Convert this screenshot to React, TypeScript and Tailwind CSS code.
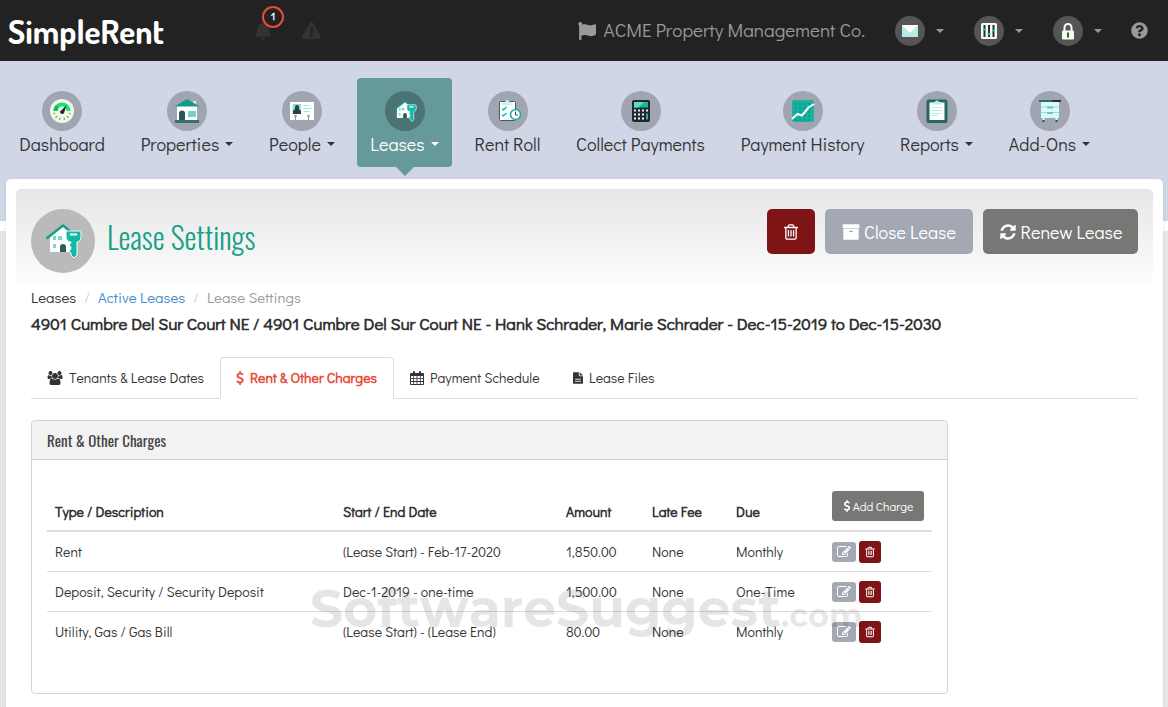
import { ReactNode } from "react";
import { FaBell, FaExclamationTriangle, FaFlag, FaQuestionCircle } from "react-icons/fa";
import clsx from "clsx";

const PATHS = {
  trash:
    "M704 736v576q0 14-9 23t-23 9h-64q-14 0-23-9t-9-23v-576q0-14 9-23t23-9h64q14 0 23 9t9 23zm256 0v576q0 14-9 23t-23 9h-64q-14 0-23-9t-9-23v-576q0-14 9-23t23-9h64q14 0 23 9t9 23zm256 0v576q0 14-9 23t-23 9h-64q-14 0-23-9t-9-23v-576q0-14 9-23t23-9h64q14 0 23 9t9 23zm128 724v-948h-896v948q0 22 7 40.5t14.5 27 10.5 8.5h832q3 0 10.5-8.5t14.5-27 7-40.5zm-672-1076h448l-48-117q-7-9-17-11h-317q-10 2-17 11zm928 32v64q0 14-9 23t-23 9h-96v948q0 83-47 143.5t-113 60.5h-832q-66 0-113-58.5t-47-141.5v-952h-96q-14 0-23-9t-9-23v-64q0-14 9-23t23-9h309l70-167q15-37 54-63t79-26h320q40 0 79 26t54 63l70 167h309q14 0 23 9t9 23z",
  refresh:
    "M1639 1056q0 5-1 7-64 268-268 434.5t-478 166.5q-146 0-282.5-55t-243.5-157l-129 129q-19 19-45 19t-45-19-19-45v-448q0-26 19-45t45-19h448q26 0 45 19t19 45-19 45l-137 137q71 66 161 102t187 36q134 0 250-65t186-179q11-17 53-117 8-23 30-23h192q13 0 22.5 9.5t9.5 22.5zm25-800v448q0 26-19 45t-45 19h-448q-26 0-45-19t-19-45 19-45l138-138q-148-137-349-137-134 0-250 65t-186 179q-11 17-53 117-8 23-30 23h-199q-13 0-22.5-9.5t-9.5-22.5v-7q65-268 270-434.5t480-166.5q146 0 284 55.5t245 156.5l130-129q19-19 45-19t45 19 19 45z",
  archive:
    "M1088 832q0-26-19-45t-45-19h-256q-26 0-45 19t-19 45 19 45 45 19h256q26 0 45-19t19-45zm576-192v960q0 26-19 45t-45 19h-1408q-26 0-45-19t-19-45v-960q0-26 19-45t45-19h1408q26 0 45 19t19 45zm64-448v256q0 26-19 45t-45 19h-1536q-26 0-45-19t-19-45v-256q0-26 19-45t45-19h1536q26 0 45 19t19 45z",
  edit: "M888 1184l116-116-152-152-116 116v56h96v96h56zm440-720q-16-16-33 1l-350 350q-17 17-1 33t33-1l350-350q17-17 1-33zm80 594v190q0 119-84.5 203.5t-203.5 84.5h-832q-119 0-203.5-84.5t-84.5-203.5v-832q0-119 84.5-203.5t203.5-84.5h832q63 0 117 25 15 7 18 23 3 17-9 29l-49 49q-14 14-32 8-23-6-45-6h-832q-66 0-113 47t-47 113v832q0 66 47 113t113 47h832q66 0 113-47t47-113v-126q0-13 9-22l64-64q15-15 35-7t20 29zm-96-738l288 288-672 672h-288v-288zm444 132l-92 92-288-288 92-92q28-28 68-28t68 28l152 152q28 28 28 68t-28 68z",
  dollar:
    "M1362 1185q0 153-99.5 263.5t-258.5 136.5v175q0 14-9 23t-23 9h-135q-13 0-22.5-9.5t-9.5-22.5v-175q-66-9-127.5-31t-101.5-44.5-74-48-46.5-37.5-17.5-18q-17-21-2-41l103-135q7-10 23-12 15-2 24 9l2 2q113 99 243 125 37 8 74 8 81 0 142.5-43t61.5-122q0-28-15-53t-33.5-42-58.5-37.5-66-32-80-32.5q-39-16-61.5-25t-61.5-26.5-62.5-31-56.5-35.5-53.5-42.5-43.5-49-35.5-58-21-66.5-8.5-78q0-138 98-242t255-134v-180q0-13 9.5-22.5t22.5-9.5h135q14 0 23 9t9 23v176q57 6 110.5 23t87 33.5 63.5 37.5 39 29 15 14q17 18 5 38l-81 146q-8 15-23 16-14 3-27-7-3-3-14.5-12t-39-26.5-58.5-32-74.5-26-85.5-11.5q-95 0-155 43t-60 111q0 26 8.5 48t29.5 41.5 39.5 33 56 31 60.5 27 70 27.5q53 20 81 31.5t76 35 75.5 42.5 62 50 53 63.5 31.5 76.5 13 94z",
  group:
    "M529 896q-162 5-265 128h-134q-82 0-138-40.5t-56-118.5q0-353 124-353 6 0 43.5 21t97.5 42.5 119 21.5q67 0 133-23-5 37-5 66 0 159 90 293zm1071 637q0 120-73 189.5t-194 69.5h-874q-121 0-194-69.5t-73-189.5q0-53 3.5-103.5t14-109 26.5-108.5 43-97.5 62-81 85.5-53.5 111.5-20q10 0 43 21.5t73 48 107 48 135 21.5 135-21.5 107-48 73-48 43-21.5q61 0 111.5 20t85.5 53.5 62 81 43 97.5 26.5 108.5 14 109 3.5 103.5zm-1024-1277q0 106-75 181t-181 75-181-75-75-181 75-181 181-75 181 75 75 181zm704 384q0 159-112.5 271.5t-271.5 112.5-271.5-112.5-112.5-271.5 112.5-271.5 271.5-112.5 271.5 112.5 112.5 271.5zm576 225q0 78-56 118.5t-138 40.5h-134q-103-123-265-128 90-134 90-293 0-29-5-66 66 23 133 23 59 0 119-21.5t97.5-42.5 43.5-21q124 0 124 353zm-128-609q0 106-75 181t-181 75-181-75-75-181 75-181 181-75 181 75 75 181z",
};

function Glyph({ name, box = "0 0 1792 1792", className }: { name: keyof typeof PATHS; box?: string; className?: string }) {
  return (
    <svg viewBox={box} fill="currentColor" aria-hidden="true" className={clsx("shrink-0", className)}>
      <path d={PATHS[name]} />
    </svg>
  );
}

function CalendarGlyph() {
  return (
    <svg viewBox="0 0 14 14" className="size-3.5 shrink-0" aria-hidden="true">
      <path fill="currentColor" d="M1 2h12a1 1 0 0 1 1 1v10a1 1 0 0 1-1 1H1a1 1 0 0 1-1-1V3a1 1 0 0 1 1-1z" />
      <path stroke="currentColor" strokeWidth="2" strokeLinecap="round" d="M4 1v2M10 1v2" />
      <path
        fill="#fff"
        d="M1 5h2.3v2H1zM4.1 5h2.5v2H4.1zM7.4 5h2.5v2H7.4zM10.7 5H13v2h-2.3zM1 7.8h2.3v2.3H1zM4.1 7.8h2.5v2.3H4.1zM7.4 7.8h2.5v2.3H7.4zM10.7 7.8H13v2.3h-2.3zM1 10.9h2.3V13H1zM4.1 10.9h2.5V13H4.1zM7.4 10.9h2.5V13H7.4zM10.7 10.9H13V13h-2.3z"
      />
    </svg>
  );
}

function FileGlyph() {
  return (
    <svg viewBox="0 0 12 14" className="h-3 w-2.5 shrink-0" aria-hidden="true">
      <path fill="currentColor" d="M1 0h6v4a1 1 0 0 0 1 1h4v8a1 1 0 0 1-1 1H1a1 1 0 0 1-1-1V1a1 1 0 0 1 1-1zM8 0l4 4H8z" />
      <path stroke="#fff" d="M2.5 8.500h7M2.5 11h7" />
    </svg>
  );
}

function Caret() {
  return (
    <svg viewBox="0 0 8 4" className="h-1 w-2 shrink-0" fill="currentColor" aria-hidden="true">
      <path d="M0 0h8L4 4z" />
    </svg>
  );
}

// House with a key, drawn on a 64 unit disc
function LeaseArt({ className, disc }: { className: string; disc: string }) {
  return (
    <svg viewBox="0 0 64 64" className={className} aria-hidden="true">
      <circle cx="32" cy="32" r="32" fill={disc} />
      <path fill="#fff" d="M19 27l13-10 12 10v16H19z" />
      <path fill="none" stroke="#16a085" strokeWidth="2.5" d="M15.500 29.500L32 16.500l13 10.500" />
      <path fill="#7fd6cf" d="M22 27h3v4h-3zM27 27h4v4h-4zM22 35h3v4h-3z" />
      <path fill="#2c5f5b" d="M29 43v-5a3 3 0 0 1 6 0v5z" />
      <path
        fill="#14b8a6"
        stroke="#e9fffb"
        strokeWidth="1"
        d="M36 22h12a2 2 0 0 1 2 2v4a5 5 0 0 1-4 5v13l-3 3-3-3v-2l-2-2 2-2v-2l-2-2 2-2v-1a5 5 0 0 1-5-5v-4a2 2 0 0 1 1-2z"
      />
      <path fill="#fff" d="M39 24.500h7v2h-7z" />
    </svg>
  );
}

function Disc({ children }: { children: ReactNode }) {
  return (
    <svg viewBox="0 0 40 40" className="size-10" aria-hidden="true">
      <circle cx="20" cy="20" r="20" fill="#a0a5b1" />
      {children}
    </svg>
  );
}

const art = {
  dashboard: (
    <Disc>
      <circle cx="20" cy="20" r="12" fill="#f3f7e6" />
      <path fill="none" stroke="#1ee07a" strokeWidth="4" d="M13.500 20a6.500 6.500 0 0 1 13 0" />
      <path fill="none" stroke="#19b866" strokeWidth="4" d="M13.500 20a6.500 6.500 0 0 1 2-4.700" />
      <path stroke="#2fbf71" strokeWidth="1.200" d="M13 22l-1.500 1M15 25l-1.500 2M18 26.500l-.5 2.500M22 26.500l.5 2.500M25 25l1.500 2M27 22l1.500 1" />
      <path fill="#20262b" d="M24.500 14.500l-2.500 7.500a2.200 2.200 0 0 1-4-1.500z" />
    </Disc>
  ),
  properties: (
    <Disc>
      <path fill="#cdeef4" d="M26 10h3v5h-3z" />
      <path fill="#fff" d="M10 14h20v16H10z" />
      <path fill="#16998a" d="M7.500 15.500L20 8l12.500 7.500z" />
      <path fill="#2f5554" d="M12 29v-6.500a3 3 0 0 1 6 0V29z" />
      <path fill="#73cfd3" d="M21 20h8v6h-8z" />
      <path fill="#3b6f6b" d="M8 29h24v3H8z" />
    </Disc>
  ),
  people: (
    <Disc>
      <path fill="#fff" d="M8 11h24v18H8z" />
      <path fill="#8fdedb" d="M10.500 13H19v10h-8.500z" />
      <path fill="#2b4145" d="M13 16a2 2 0 0 1 4 0v2l2 2v3h-8v-3l2-2z" />
      <path stroke="#a5e3e0" d="M21.500 14.500h5M21.500 17.500h9M21.500 20.500h6" />
      <path fill="none" stroke="#8d98a3" d="M13.500 29v-4M26.500 29v-4" />
      <circle cx="13.500" cy="25" r="1.300" fill="#8d98a3" />
      <circle cx="26.500" cy="25" r="1.300" fill="#8d98a3" />
    </Disc>
  ),
  leases: <LeaseArt className="size-10" disc="#4c7373" />,
  rentRoll: (
    <Disc>
      <rect x="11.500" y="10.500" width="16" height="19" rx="1" fill="#fff" stroke="#3b5f66" />
      <path fill="#c7f4ef" d="M14 14v-2.500h3a2.200 2.200 0 0 1 4.500 0h3V14z" />
      <path fill="none" stroke="#17b5a3" strokeWidth="1.300" d="M14 17.500l1.500 1.500 3-3M14 23.500l1.500 1.500 3-3" />
      <circle cx="27.500" cy="23.500" r="5" fill="#fff" stroke="#12b3a2" strokeWidth="1.600" />
      <path fill="none" stroke="#2f5554" d="M27.500 20.500V24H30" />
    </Disc>
  ),
  collect: (
    <Disc>
      <rect x="11" y="9" width="18" height="22" rx="2" fill="#22282c" />
      <path fill="#16b8a0" d="M13 11h14v5.500H13z" />
      <path fill="#5fdccb" d="M13 11h10l-6 5.500h-4z" />
      <path
        fill="#dff7f3"
        d="M13 18.500h2v2h-2zM17 18.500h2v2h-2zM21 18.500h2v2h-2zM25 18.500h2v2h-2zM13 22.500h2v2h-2zM17 22.500h2v2h-2zM21 22.500h2v2h-2zM13 26.500h2v2h-2zM17 26.500h2v2h-2zM21 26.500h2v2h-2z"
      />
      <path fill="#16b8a0" d="M25 22.500h2v6h-2z" />
    </Disc>
  ),
  history: (
    <Disc>
      <rect x="9" y="9" width="22" height="22" rx="2" fill="#17b3a3" />
      <path stroke="#0e9385" strokeDasharray="3 1.500" strokeWidth="2.500" d="M11 13h18M11 17h18M11 21h18M11 25h18M11 28.500h18" opacity=".6" />
      <path fill="none" stroke="#fff" strokeWidth="2" d="M9 28l5.500-5 4.500 1.500 6.500-8L31 13" />
    </Disc>
  ),
  reports: (
    <Disc>
      <rect x="9.500" y="8.500" width="21" height="23.500" rx="2" fill="#23695f" />
      <path fill="#fff" d="M12.500 11.500h15V29h-15z" />
      <path fill="#b7f0ea" d="M15.500 13.500V11H18a2.100 2.100 0 0 1 4 0h2.500v2.500z" />
      <path stroke="#bdeae6" d="M14.500 16.500h11M14.500 19.500h11M14.500 22.500h9M14.500 24.500h6" />
    </Disc>
  ),
  addOns: (
    <Disc>
      <path fill="#d8fbf8" d="M11 11h18v16H11z" />
      <path fill="#2e6d68" d="M9 9h13v2H9z" />
      <path fill="#22343a" d="M22 9h9v2h-9z" />
      <path stroke="#9adfdb" d="M11 16h18M11 21.500h18" />
      <path fill="#6cc5c3" d="M17 15.500h6v2h-6zM17 21h6v2h-6z" />
      <path stroke="#d8fbf8" strokeWidth="2" d="M13.500 27v2.500M26.500 27v2.500" />
      <path stroke="#2e4b50" strokeWidth="2" d="M12.500 30h2M25.500 30h2" />
    </Disc>
  ),
};

const navItems = [
  { label: "Dashboard", icon: art.dashboard, width: "w-[110px]" },
  { label: "Properties", icon: art.properties, width: "w-[120px]", menu: true },
  { label: "People", icon: art.people, width: "w-[90px]", menu: true },
  { label: "Leases", icon: art.leases, width: "w-[95px]", menu: true, active: true },
  { label: "Rent Roll", icon: art.rentRoll, width: "w-[91px]" },
  { label: "Collect Payments", icon: art.collect, width: "w-[155px]" },
  { label: "Payment History", icon: art.history, width: "w-[149px]" },
  { label: "Reports", icon: art.reports, width: "w-[99px]", menu: true },
  { label: "Add-Ons", icon: art.addOns, width: "w-[107px]", menu: true },
];

const topMenus = [
  {
    label: "Messages",
    icon: (
      <>
        <path fill="#b5ece6" d="M7 9h16v12H7z" />
        <path fill="#fff" d="M7 9h16l-8 8z" />
      </>
    ),
  },
  {
    label: "Preferences",
    icon: (
      <>
        <rect x="7" y="7" width="16" height="16" rx="1.500" fill="#f4fbf4" />
        <path stroke="#26302c" strokeWidth="2" d="M10.500 9v12M15 9v12M19.500 9v12" />
        <path stroke="#1ad07a" strokeWidth="2" d="M9 13.500h3M13.500 18h3M18 14.500h3" />
      </>
    ),
  },
  {
    label: "Account",
    icon: (
      <>
        <path fill="none" stroke="#f6fbf2" strokeWidth="2" d="M11.500 15v-3.500a3.500 3.500 0 0 1 7 0V15" />
        <rect x="9" y="14.500" width="12" height="9" rx="1" fill="#f6fbe6" />
        <path fill="#2a5a50" d="M14 16.500h2v5h-2z" />
      </>
    ),
  },
];

const tabs = [
  { label: "Tenants & Lease Dates", icon: <Glyph name="group" box="-64 0 1920 1792" className="h-3.5 w-4" />, width: "w-[189px]" },
  { label: "Rent & Other Charges", icon: <Glyph name="dollar" box="384 0 1024 1792" className="h-3.5 w-2" />, width: "w-[174px]", active: true },
  { label: "Payment Schedule", icon: <CalendarGlyph />, width: "w-[163px]" },
  { label: "Lease Files", icon: <FileGlyph />, width: "w-[116px]" },
];

const charges = [
  { type: "Rent", dates: "(Lease Start) - Feb-17-2020", amount: "1,850.00", fee: "None", due: "Monthly" },
  { type: "Deposit, Security / Security Deposit", dates: "Dec-1-2019 - one-time", amount: "1,500.00", fee: "None", due: "One-Time" },
  { type: "Utility, Gas / Gas Bill", dates: "(Lease Start) - (Lease End)", amount: "80.00", fee: "None", due: "Monthly" },
];

function TopBar() {
  return (
    <header className="flex h-[61px] items-center bg-[#222] pl-2 pr-5 text-[#999]">
      <a href="#" className="w-[246px] font-['Dosis','Lato',sans-serif] text-[33px] leading-10 font-bold text-white">
        SimpleRent
      </a>
      <button aria-label="Notifications" className="relative text-[#333]">
        <FaBell size={18} />
        <span className="absolute -top-4 left-2 flex size-[22px] items-center justify-center rounded-full border-2 border-[#e74c3c] bg-[#222] text-[11px] font-bold text-white">
          1
        </span>
      </button>
      <button aria-label="Warnings" className="ml-[30px] text-[#333]">
        <FaExclamationTriangle size={19} />
      </button>
      <a href="#" className="ml-auto flex items-center gap-2 text-[19px]">
        <FaFlag size={18} />
        ACME Property Management Co.
      </a>
      <div className="ml-[30px] flex gap-[30px]">
        {topMenus.map((m) => (
          <button key={m.label} aria-label={m.label} className="flex items-center gap-[11px]">
            <svg viewBox="0 0 30 30" className="size-[30px]" aria-hidden="true">
              <circle cx="15" cy="15" r="15" fill="#555" />
              {m.icon}
            </svg>
            <Caret />
          </button>
        ))}
      </div>
      <a href="#" aria-label="Help" className="ml-[29px]">
        <FaQuestionCircle size={17} />
      </a>
    </header>
  );
}

function MainNav() {
  return (
    <nav className="flex h-40 items-start gap-2.5 bg-[#d0d6e6] pt-[17px] pl-[7px]">
      {navItems.map((item) => (
        <a
          key={item.label}
          href="#"
          className={clsx(
            "relative flex h-[89px] shrink-0 flex-col items-center rounded pt-[13px] text-lg leading-[26px] whitespace-nowrap",
            item.width,
            item.active ? "bg-[#669999] text-white" : "text-[#333]"
          )}
        >
          {item.icon}
          <span className="flex items-center gap-1.5">
            {item.label}
            {item.menu && <Caret />}
          </span>
          {item.active && (
            <svg viewBox="0 0 18 9" className="absolute top-full h-[9px] w-[18px]" fill="#669999" aria-hidden="true">
              <path d="M0 0h18L9 9z" />
            </svg>
          )}
        </a>
      ))}
    </nav>
  );
}

function LeaseHeader() {
  return (
    <div className="flex h-[95px] items-start gap-2.5 rounded-t-[5px] bg-linear-to-b from-[#e6e6e6] to-[#fdfdfd] px-[15px] pt-5">
      <LeaseArt className="size-16 shrink-0" disc="#bababa" />
      <h1 className="ml-0.5 flex-1 font-['Oswald','Liberation_Sans_Narrow',sans-serif] text-[30px] leading-[56px] font-light text-[#16a085]">
        Lease Settings
      </h1>
      <button aria-label="Delete lease" className="flex h-[45px] w-12 items-center justify-center rounded-[5px] bg-[#7f1416] text-white">
        <Glyph name="trash" className="size-[18px]" />
      </button>
      <button className="flex h-[45px] w-[148px] items-center justify-center gap-1 rounded-[5px] bg-[#a3a8b2] text-lg text-white">
        <Glyph name="archive" className="size-[18px]" />
        Close Lease
      </button>
      <button className="flex h-[45px] w-[155px] items-center justify-center gap-1 rounded-[5px] bg-[#777775] text-lg text-white">
        <Glyph name="refresh" className="size-[18px]" />
        Renew Lease
      </button>
    </div>
  );
}

function ChargesPanel() {
  return (
    <section className="relative mt-[21px] w-full max-w-[917px] rounded border border-[#d3d3d3] pb-[42px]">
      <h2 className="h-[39px] rounded-t border-b border-[#d3d3d3] bg-[#f2f2f2] px-[15px] font-['Oswald','Liberation_Sans_Narrow',sans-serif] text-[15px] leading-[38px] font-normal text-[#444]">
        Rent &amp; Other Charges
      </h2>
      <div className="px-[15px] pt-[23px]">
        <table className="w-full table-fixed text-left text-sm">
          <thead>
            <tr className="h-12 border-b-2 border-[#ddd]">
              <th className="w-[288px] px-2 pt-2.5 font-bold">Type / Description</th>
              <th className="w-[223px] px-2 pt-2.5 font-bold">Start / End Date</th>
              <th className="w-[86px] px-2 pt-2.5 font-bold">Amount</th>
              <th className="w-[84px] px-2 pt-2.5 font-bold">Late Fee</th>
              <th className="w-24 px-2 pt-2.5 font-bold">Due</th>
              <th className="w-[108px] px-2 align-top">
                <button className="mt-2 flex h-[30px] w-[92px] items-center justify-center gap-0.5 rounded-[3px] bg-[#777775] text-xs font-normal text-white">
                  <Glyph name="dollar" box="384 0 1024 1792" className="h-3 w-2" />
                  Add Charge
                </button>
              </th>
            </tr>
          </thead>
          <tbody>
            {charges.map((c) => (
              <tr key={c.type} className="h-10 border-b border-[#ddd] last:border-0">
                <td className="px-2 pt-0.5">{c.type}</td>
                <td className="px-2 pt-0.5">{c.dates}</td>
                <td className="px-2 pt-0.5">{c.amount}</td>
                <td className="px-2 pt-0.5">{c.fee}</td>
                <td className="px-2 pt-0.5">{c.due}</td>
                <td className="px-2 pt-0.5">
                  <div className="flex items-center gap-[3px] text-white">
                    <button aria-label={"Edit " + c.type} className="flex h-5 w-6 items-center justify-center rounded-[3px] bg-[#a3a8b2]">
                      <Glyph name="edit" className="size-3.5" />
                    </button>
                    <button aria-label={"Delete " + c.type} className="flex size-[22px] items-center justify-center rounded-[3px] bg-[#7f1416]">
                      <Glyph name="trash" className="size-3" />
                    </button>
                  </div>
                </td>
              </tr>
            ))}
          </tbody>
        </table>
      </div>
      <div className="pointer-events-none absolute top-[156px] left-[278px] font-['Montserrat','Inter',sans-serif] text-[52px] leading-[64px] font-bold whitespace-nowrap text-black/10">
        SoftwareSuggest<span className="text-[32px]">.com</span>
      </div>
    </section>
  );
}

export default function App() {
  return (
    <div className="flex min-h-screen flex-col bg-[#e6e6e6] font-['Didact_Gothic','Lato',sans-serif] text-[#333] [font-kerning:none]">
      <TopBar />
      <MainNav />
      <div className="flex flex-1 flex-col border-t-10 border-white pr-[5px] pl-1.5">
        <main className="relative -mt-[52px] flex-1 rounded-t-[5px] bg-white p-2.5 pb-3 shadow-sm">
          <LeaseHeader />
          <div className="px-[15px]">
            <nav aria-label="Breadcrumb" className="flex h-[26px] items-center gap-2 text-[15px]">
              <a href="#">Leases</a>
              <span className="text-[#ccc]">/</span>
              <a href="#" className="text-[#428bca]">
                Active Leases
              </a>
              <span className="text-[#ccc]">/</span>
              <span className="text-[#999]">Lease Settings</span>
            </nav>
            <h3 className="text-[17px] leading-7 font-bold">
              4901 Cumbre Del Sur Court NE / 4901 Cumbre Del Sur Court NE - Hank Schrader, Marie Schrader - Dec-15-2019 to Dec-15-2030
            </h3>
            <div role="tablist" className="mt-[19px] flex border-b border-[#ddd] text-sm">
              {tabs.map((tab) => (
                <button
                  key={tab.label}
                  role="tab"
                  aria-selected={!!tab.active}
                  className={clsx(
                    "-mb-px flex h-[42px] items-center gap-1.5 rounded-t border px-[15px] whitespace-nowrap",
                    tab.width,
                    tab.active ? "border-[#ddd] border-b-white bg-white font-bold text-[#e74c3c]" : "border-transparent"
                  )}
                >
                  {tab.icon}
                  {tab.label}
                </button>
              ))}
            </div>
            <ChargesPanel />
          </div>
        </main>
      </div>
    </div>
  );
}
